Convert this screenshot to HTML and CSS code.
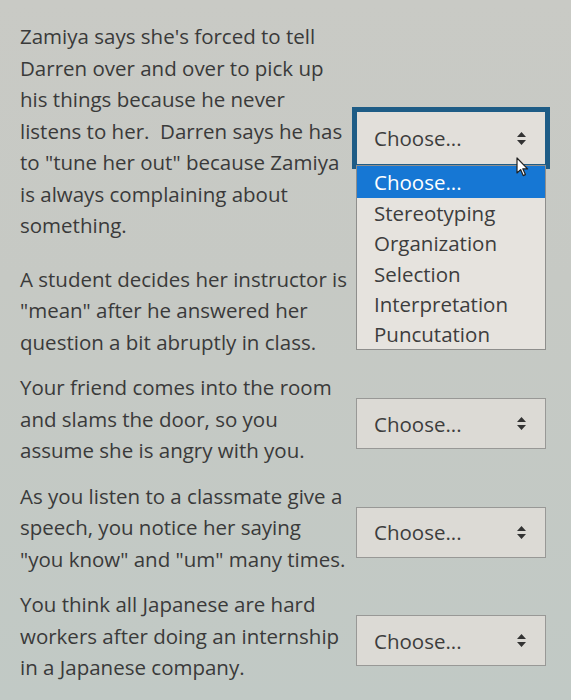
FILE: index.html
```html
<!DOCTYPE html>
<html>
<head>
<meta charset="utf-8">
<link rel="stylesheet" href="styles.css">
</head>
<body>
<div class="page">
  <div class="row first">
    <div class="text">Zamiya says she's forced to tell<br>Darren over and over to pick up<br>his things because he never<br>listens to her.&nbsp; Darren says he has<br>to "tune her out" because Zamiya<br>is always complaining about<br>something.</div>
    <div class="sel-wrap">
      <div class="select focused">
        <span class="label">Choose...</span>
        <svg class="arrows" width="9" height="13" viewBox="0 0 9 13"><path d="M0 5 L4.5 0 L9 5 Z M0 8 L4.5 13 L9 8 Z" fill="#333"/></svg>
      </div>
      <ul class="list">
        <li class="active">Choose...</li>
        <li>Stereotyping</li>
        <li>Organization</li>
        <li>Selection</li>
        <li>Interpretation</li>
        <li>Puncutation</li>
      </ul>
      <svg class="cursor" width="13" height="20" viewBox="0 0 13 20"><path d="M1 1 L1 16 L4.6 12.6 L7.2 18.6 L9.4 17.6 L6.8 11.8 L11.6 11.8 Z" fill="#fff" stroke="#222" stroke-width="1.2" stroke-linejoin="round"/></svg>
    </div>
  </div>
  <div class="row">
    <div class="text">A student decides her instructor is<br>"mean" after he answered her<br>question a bit abruptly in class.</div>
    <div class="sel-wrap covered">
      <div class="select">
        <span class="label">Choose...</span>
        <svg class="arrows" width="9" height="13" viewBox="0 0 9 13"><path d="M0 5 L4.5 0 L9 5 Z M0 8 L4.5 13 L9 8 Z" fill="#333"/></svg>
      </div>
    </div>
  </div>
  <div class="row">
    <div class="text">Your friend comes into the room<br>and slams the door, so you<br>assume she is angry with you.</div>
    <div class="sel-wrap">
      <div class="select">
        <span class="label">Choose...</span>
        <svg class="arrows" width="9" height="13" viewBox="0 0 9 13"><path d="M0 5 L4.5 0 L9 5 Z M0 8 L4.5 13 L9 8 Z" fill="#333"/></svg>
      </div>
    </div>
  </div>
  <div class="row">
    <div class="text">As you listen to a classmate give a<br>speech, you notice her saying<br>"you know" and "um" many times.</div>
    <div class="sel-wrap">
      <div class="select">
        <span class="label">Choose...</span>
        <svg class="arrows" width="9" height="13" viewBox="0 0 9 13"><path d="M0 5 L4.5 0 L9 5 Z M0 8 L4.5 13 L9 8 Z" fill="#333"/></svg>
      </div>
    </div>
  </div>
  <div class="row">
    <div class="text">You think all Japanese are hard<br>workers after doing an internship<br>in a Japanese company.</div>
    <div class="sel-wrap">
      <div class="select">
        <span class="label">Choose...</span>
        <svg class="arrows" width="9" height="13" viewBox="0 0 9 13"><path d="M0 5 L4.5 0 L9 5 Z M0 8 L4.5 13 L9 8 Z" fill="#333"/></svg>
      </div>
    </div>
  </div>
</div>
</body>
</html>
```

FILE: styles.css
```css
html, body {
  margin: 0;
  padding: 0;
}
body {
  width: 571px;
  height: 700px;
  overflow: hidden;
  background: linear-gradient(180deg, #c9cac5 0%, #c6c9c4 40%, #c1c9c5 100%);
  font-family: "Open Sans", "Noto Sans", sans-serif;
  color: #3a3a3a;
}
.page {
  padding: 21px 0 0 20px;
}
.row {
  display: flex;
  align-items: center;
  margin-bottom: 14px;
}
.row.first {
  margin-bottom: 22px;
}
.text {
  width: 336px;
  font-size: 20.5px;
  line-height: 31.5px;
  white-space: nowrap;
}
.sel-wrap {
  position: relative;
  margin-top: 9px;
}
.sel-wrap.covered {
  visibility: hidden;
}
.row.first .sel-wrap {
  margin-top: 14px;
}
.select {
  box-sizing: border-box;
  width: 190px;
  height: 51px;
  background: #dcdad5;
  border: 1px solid #989896;
  display: flex;
  align-items: center;
  justify-content: space-between;
  padding: 0 19px 0 17px;
  font-size: 20.5px;
}
.select.focused {
  height: 54px;
  outline: 4px solid #1e5c86;
  border-color: #1e5c86;
  background: #e2dfda;
}
.label {
  color: #3d3d3d;
}
.list {
  position: absolute;
  left: 0;
  top: 54px;
  box-sizing: border-box;
  width: 190px;
  margin: 0;
  padding: 0;
  list-style: none;
  background: #e6e3de;
  border: 1px solid #8e8e8c;
  font-size: 20.5px;
  z-index: 2;
}
.list li {
  height: 30.2px;
  line-height: 30.2px;
  padding-left: 17px;
  color: #3d3d3d;
}
.list li.active {
  height: 32px;
  line-height: 32px;
  background: #1677d4;
  color: #ffffff;
}
.cursor {
  position: absolute;
  left: 160px;
  top: 46px;
  z-index: 3;
}
```
